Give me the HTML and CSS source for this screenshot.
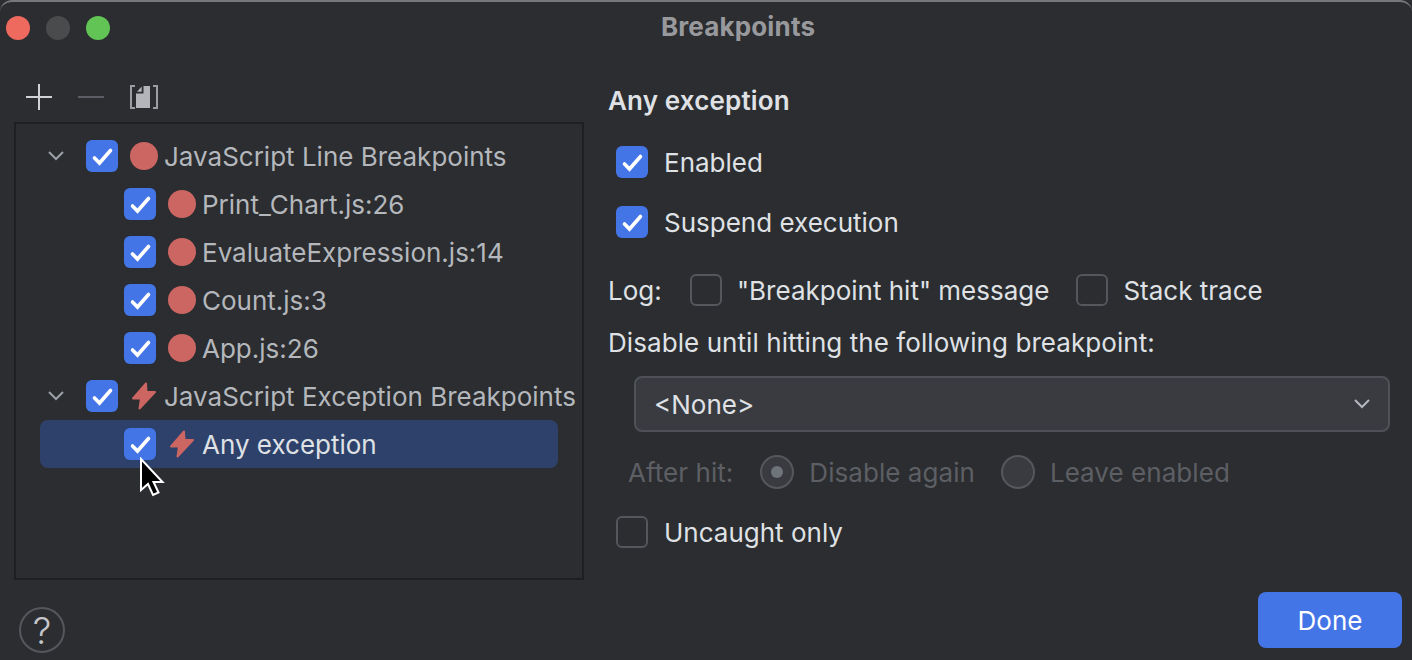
FILE: index.html
```html
<!DOCTYPE html>
<html lang="en">
<head>
<meta charset="utf-8">
<title>Breakpoints</title>
<link rel="stylesheet" href="styles.css">
</head>
<body>
<div class="window">
  <header class="titlebar">
    <div class="lights"><span class="light red"></span><span class="light grey"></span><span class="light green"></span></div>
    <h1 class="title">Breakpoints</h1>
  </header>
  <div class="main">
    <section class="left">
      <div class="toolbar">
        <svg class="tool" width="26" height="26" viewBox="0 0 26 26"><path d="M0 13H26M13 0V26" stroke="#d0d2d6" stroke-width="2" fill="none"/></svg>
        <svg class="tool" width="26" height="26" viewBox="0 0 26 26"><path d="M0 13H26" stroke="#5a5d63" stroke-width="2" fill="none"/></svg>
        <svg class="tool" width="28" height="26" viewBox="0 0 28 26"><path d="M5 2H1V24H5M23 2H27V24H23" stroke="#9a9da3" stroke-width="2" fill="none"/><path d="M13.5 2H20V24H6V9.5H13.5Z" fill="#b3b5ba"/><path d="M11.7 2.5V7.7H7Z" fill="#b3b5ba"/></svg>
      </div>
      <div class="tree">
        <div class="row">
          <svg class="chev" width="16" height="10" viewBox="0 0 16 10"><path d="M1 1L8 8L15 1" stroke="#9da0a8" stroke-width="2" fill="none"/></svg>
          <span class="check on"><svg width="32" height="32" viewBox="0 0 32 32"><path d="M8.5 18L13.5 23L24.5 10.5" stroke="#fff" stroke-width="3.6" stroke-linecap="round" fill="none"/></svg></span>
          <span class="dot"></span><span class="label">JavaScript Line Breakpoints</span>
        </div>
        <div class="row child">
          <span class="check on"><svg width="32" height="32" viewBox="0 0 32 32"><path d="M8.5 18L13.5 23L24.5 10.5" stroke="#fff" stroke-width="3.6" stroke-linecap="round" fill="none"/></svg></span>
          <span class="dot"></span><span class="label">Print_Chart.js:26</span>
        </div>
        <div class="row child">
          <span class="check on"><svg width="32" height="32" viewBox="0 0 32 32"><path d="M8.5 18L13.5 23L24.5 10.5" stroke="#fff" stroke-width="3.6" stroke-linecap="round" fill="none"/></svg></span>
          <span class="dot"></span><span class="label">EvaluateExpression.js:14</span>
        </div>
        <div class="row child">
          <span class="check on"><svg width="32" height="32" viewBox="0 0 32 32"><path d="M8.5 18L13.5 23L24.5 10.5" stroke="#fff" stroke-width="3.6" stroke-linecap="round" fill="none"/></svg></span>
          <span class="dot"></span><span class="label">Count.js:3</span>
        </div>
        <div class="row child">
          <span class="check on"><svg width="32" height="32" viewBox="0 0 32 32"><path d="M8.5 18L13.5 23L24.5 10.5" stroke="#fff" stroke-width="3.6" stroke-linecap="round" fill="none"/></svg></span>
          <span class="dot"></span><span class="label">App.js:26</span>
        </div>
        <div class="row">
          <svg class="chev" width="16" height="10" viewBox="0 0 16 10"><path d="M1 1L8 8L15 1" stroke="#9da0a8" stroke-width="2" fill="none"/></svg>
          <span class="check on"><svg width="32" height="32" viewBox="0 0 32 32"><path d="M8.5 18L13.5 23L24.5 10.5" stroke="#fff" stroke-width="3.6" stroke-linecap="round" fill="none"/></svg></span>
          <svg class="bolt" width="28" height="30" viewBox="0 0 28 30"><path d="M16 2.5L3 17.5H11L9.5 27.5L25 11H16.5Z" fill="#cc6662" stroke="#cc6662" stroke-width="2" stroke-linejoin="round"/></svg><span class="label">JavaScript Exception Breakpoints</span>
        </div>
        <div class="row child selected">
          <span class="check on"><svg width="32" height="32" viewBox="0 0 32 32"><path d="M8.5 18L13.5 23L24.5 10.5" stroke="#fff" stroke-width="3.6" stroke-linecap="round" fill="none"/></svg></span>
          <svg class="bolt" width="28" height="30" viewBox="0 0 28 30"><path d="M16 2.5L3 17.5H11L9.5 27.5L25 11H16.5Z" fill="#cc6662" stroke="#cc6662" stroke-width="2" stroke-linejoin="round"/></svg><span class="label">Any exception</span>
          <svg class="cursor" width="26" height="40" viewBox="0 0 26 40"><path d="M2 2V33L9 27L14 38L19.5 35.5L14.5 25H23.5Z" fill="#000" stroke="#fff" stroke-width="2"/></svg>
        </div>
      </div>
    </section>
    <section class="right">
      <h2 class="heading">Any exception</h2>
      <label class="opt first"><span class="check on"><svg width="32" height="32" viewBox="0 0 32 32"><path d="M8.5 18L13.5 23L24.5 10.5" stroke="#fff" stroke-width="3.6" stroke-linecap="round" fill="none"/></svg></span>Enabled</label>
      <label class="opt"><span class="check on"><svg width="32" height="32" viewBox="0 0 32 32"><path d="M8.5 18L13.5 23L24.5 10.5" stroke="#fff" stroke-width="3.6" stroke-linecap="round" fill="none"/></svg></span>Suspend execution</label>
      <div class="logrow">
        <span class="loglabel">Log:</span>
        <label class="inline"><span class="check"></span>"Breakpoint hit" message</label>
        <label class="inline"><span class="check"></span>Stack trace</label>
      </div>
      <div class="until">Disable until hitting the following breakpoint:</div>
      <div class="combo"><span>&lt;None&gt;</span><svg width="16" height="10" viewBox="0 0 16 10"><path d="M1 1L8 8L15 1" stroke="#b4b7bd" stroke-width="2" fill="none"/></svg></div>
      <div class="afterhit">
        <span>After hit:</span>
        <span class="radio-item"><span class="radio sel"></span>Disable again</span>
        <span class="radio-item"><span class="radio"></span>Leave enabled</span>
      </div>
      <label class="opt uncaught"><span class="check"></span>Uncaught only</label>
    </section>
  </div>
  <footer class="footer">
    <span class="help">?</span>
    <button class="done">Done</button>
  </footer>
</div>
</body>
</html>
```
FILE: styles.css
```css
* { box-sizing: border-box; }
html, body { margin: 0; padding: 0; background: #2b2d30; }
body { width: 1412px; height: 660px; overflow: hidden; font-family: Inter, "Liberation Sans", sans-serif; font-size: 26px; color: #dfe1e5; }
.window { width: 1412px; height: 660px; background: #2b2d30; border-top: 2px solid #77787b; border-radius: 12px 12px 0 0; display: flex; flex-direction: column; }
.titlebar { height: 52px; display: flex; align-items: center; position: relative; flex: none; }
.lights { display: flex; gap: 16px; padding-left: 6px; }
.light { width: 24px; height: 24px; border-radius: 50%; }
.red { background: #ee6a5f; }
.grey { background: #4a4b4d; }
.green { background: #61c454; }
.title { position: absolute; left: 64px; right: 0; top: 0; margin: 0; text-align: center; font-size: 26px; line-height: 50px; font-weight: 700; letter-spacing: 0.15px; color: #98999c; }
.main { display: flex; flex: none; height: 526px; }
.left { width: 570px; margin-left: 14px; display: flex; flex-direction: column; flex: none; }
.toolbar { height: 68px; display: flex; align-items: center; gap: 26px; padding: 18px 0 0 12px; flex: none; }
.tool { flex: none; }
.tree { height: 458px; border: 2px solid #1e1f22; padding-top: 8px; }
.row { height: 48px; width: 518px; margin-left: 24px; padding-left: 8px; display: flex; align-items: center; white-space: nowrap; color: #b4b7bc; position: relative; border-radius: 8px; }
.row.child { padding-left: 84px; }
.selected { background: #2e416b; color: #dfe1e5; }
.chev { margin-right: 22px; flex: none; }
.check { width: 32px; height: 32px; border-radius: 6px; border: 2px solid #55575c; flex: none; display: block; }
.check.on { background: #4475e6; border: 0; }
.check svg { display: block; }
.dot { width: 28px; height: 28px; border-radius: 50%; background: #cc6662; margin: 0 6px 0 12px; flex: none; }
.bolt { margin: 0 6px 0 12px; flex: none; }
.cursor { position: absolute; left: 99px; top: 37px; }
.right { margin-left: 24px; width: 790px; flex: none; }
.heading { margin: 0; font-size: 26px; font-weight: 600; letter-spacing: 0.15px; line-height: 40px; padding-top: 27px; height: 67px; color: #dfe1e5; }
.opt { display: flex; align-items: center; gap: 16px; margin-left: 8px; height: 32px; margin-top: 28px; }
.opt.first { margin-top: 25px; }
.logrow { display: flex; align-items: center; height: 32px; margin-top: 36px; }
.loglabel { width: 82px; }
.inline { display: flex; align-items: center; gap: 15px; margin-right: 27px; }
.until { height: 32px; line-height: 32px; margin-top: 21px; letter-spacing: 0.07px; }
.combo { margin: 17px 0 0 26px; width: 756px; height: 56px; border: 2px solid #4e5157; border-radius: 8px; background: #393b40; display: flex; align-items: center; justify-content: space-between; padding: 0 18px; }
.afterhit { display: flex; align-items: center; height: 36px; margin: 22px 0 0 20px; color: #5d5f64; letter-spacing: 0.05px; }
.radio-item { display: flex; align-items: center; gap: 15px; margin-left: 27px; }
.radio-item + .radio-item { margin-left: 26px; }
.radio { width: 34px; height: 34px; border-radius: 50%; border: 2px solid #55575c; background: #393b40; display: flex; align-items: center; justify-content: center; }
.radio.sel::after { content: ""; width: 12px; height: 12px; border-radius: 50%; background: #6f737a; }
.uncaught { margin-top: 26px; }
.footer { position: relative; flex: 1; display: flex; align-items: flex-start; justify-content: space-between; padding: 0 10px 0 19px; }
.help { width: 46px; height: 46px; margin-top: 27px; border: 2px solid #55575c; border-radius: 50%; display: flex; align-items: center; justify-content: center; font-size: 37px; font-weight: 300; color: #c4c6ca; }
.done { width: 144px; height: 56px; margin-top: 12px; border: 0; border-radius: 8px; background: #4475e6; color: #fff; font: 400 26px Inter, "Liberation Sans", sans-serif; }
```
